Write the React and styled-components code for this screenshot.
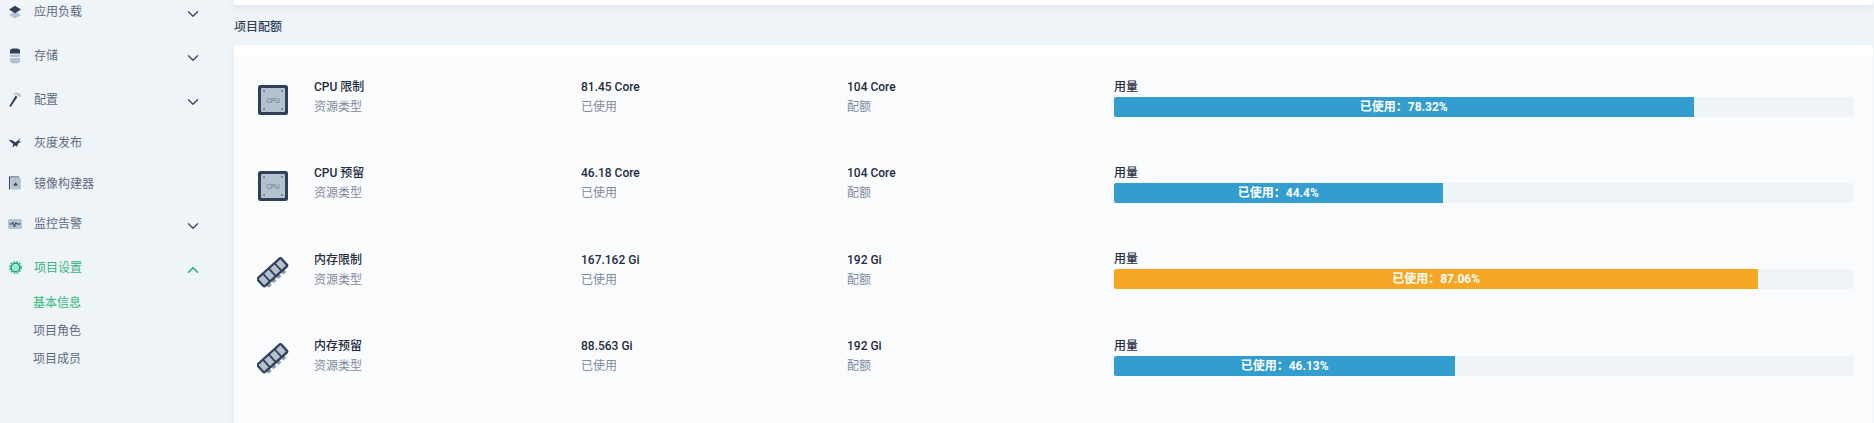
import React from "react";
import styled, { createGlobalStyle } from "styled-components";
import { ChevronDown, ChevronUp } from "lucide-react";

const GlobalStyle = createGlobalStyle`
  html, body {
    margin: 0;
    padding: 0;
    height: 423px;
    overflow: hidden;
    background: #eff4f8;
  }
  body {
    font-family: Roboto, "Noto Sans CJK SC", sans-serif;
    font-size: 12px;
    color: #2f4058;
  }
`;

const Layout = styled.div`
  display: flex;
  height: 423px;
  overflow: hidden;
`;

const Sidebar = styled.nav`
  width: 234px;
  flex: none;
  margin-top: -8px;
`;

const MenuItem = styled.div`
  display: flex;
  align-items: center;
  height: ${(p) => p.$h || 44}px;
  padding-left: 7px;
  width: 202px;
  box-sizing: border-box;
  color: ${(p) => (p.$active ? "#36b37e" : "#5c6b82")};
`;

const MenuIcon = styled.span`
  width: 16px;
  height: 16px;
  flex: none;
  display: flex;
  align-items: center;
  justify-content: center;
  margin-top: -5px;
`;

const MenuLabel = styled.span`
  margin-left: 11px;
  flex: 1;
  line-height: 16px;
  margin-top: -4px;
`;

const Chevron = styled.span`
  display: flex;
  color: ${(p) => (p.$active ? "#13a67c" : "#3b4a60")};
`;

const SubMenu = styled.div`
  display: flex;
  flex-direction: column;
  margin-top: -4px;
`;

const SubItem = styled.div`
  height: 28px;
  line-height: 28px;
  padding-left: 33px;
  color: ${(p) => (p.$active ? "#4fc08d" : "#5c6b82")};
  font-weight: ${(p) => (p.$active ? 500 : 400)};
`;

const Main = styled.main`
  flex: 1;
  min-width: 0;
  padding-right: 1px;
`;

const TopCard = styled.div`
  height: 5px;
  background: #fff;
  border-radius: 0 0 3px 3px;
  box-shadow: 0 2px 8px rgba(47, 64, 88, 0.12);
`;

const SectionTitle = styled.h3`
  margin: 0;
  height: 40px;
  line-height: 44px;
  font-size: 12px;
  font-weight: 500;
  color: #2f4058;
`;

const Card = styled.section`
  background: #fff;
  border-radius: 3px 3px 0 0;
  padding-top: 12px;
  box-shadow: -2px 2px 6px rgba(47, 64, 88, 0.05);
  height: 400px;
  box-sizing: border-box;
`;

const CardBody = styled.div`
  background: #fafbfd;
  height: 100%;
`;

const Row = styled.div`
  display: grid;
  grid-template-columns: 80px 267px 266px 267px 740px;
  align-items: center;
  height: 86.3px;
`;

const IconCell = styled.div`
  display: flex;
  padding-left: 24px;
`;

const Stat = styled.div`
  display: flex;
  flex-direction: column;
  gap: 4px;
  margin-top: -6px;
`;

const StatValue = styled.div`
  font-weight: 500;
  line-height: 16px;
  color: #1f2d40;
`;

const StatLabel = styled.div`
  line-height: 16px;
  color: #7d8ba0;
`;

const Usage = styled.div`
  display: flex;
  flex-direction: column;
  gap: 1px;
  margin-top: -6px;
`;

const UsageLabel = styled.div`
  font-weight: 500;
  line-height: 18px;
  color: #1f2d40;
`;

const Track = styled.div`
  height: 20px;
  background: #eff4f8;
  border-radius: 2px;
  overflow: hidden;
`;

const Fill = styled.div`
  height: 100%;
  background: ${(p) => (p.$warn ? "#f5a623" : "#329dce")};
  color: #fff;
  font-weight: 700;
  line-height: 20px;
  text-align: center;
  white-space: nowrap;
`;

const LayersIcon = () => (
  <svg width="14" height="14" viewBox="0 0 14 14">
    <path d="M7 6.5 13 10 7 13.4 1 10z" fill="#b4c1cf" />
    <path d="M7 .8 13 4.5 7 8.2 1 4.5z" fill="#2f4058" />
  </svg>
);

const DatabaseIcon = () => (
  <svg width="12" height="16" viewBox="0 0 12 16">
    <path d="M1 2.5C1 1 3 .5 6 .5s5 .5 5 2v3H1z" fill="#2f4058" />
    <path d="M1 6.5h10V9H1zM1 10h10v3.5c0 1.5-2 2-5 2s-5-.5-5-2z" fill="#b4c1cf" />
  </svg>
);

const HammerIcon = () => (
  <svg width="14" height="16" viewBox="0 0 14 16">
    <path d="M7.6 3.4 9.4 5 3 14.6c-.5.6-1.8-.2-1.5-.9z" fill="#2f4058" />
    <path d="M3.8 2.4C6.5.2 9.6.2 12 1.6l1.2 2.6-2 .9C9.6 3 7 2 3.8 2.4z" fill="#b4c1cf" />
  </svg>
);

const BirdIcon = () => (
  <svg width="14" height="12" viewBox="0 0 14 12">
    <path d="M.6 2.4 5 3.6 7 5.2l2-1L12.6.8 10.8 4l2.6 1-3.2 1.2-1 3.6L7 8.4l-2.6 2 .8-3.4L3 5.2z" fill="#2f4058" />
  </svg>
);

const ImageBuildIcon = () => (
  <svg width="12" height="14" viewBox="0 0 12 14">
    <path d="M0 .4h10v1H1v12H0z" fill="#2f4058" />
    <rect x="1.4" y="1.6" width="10.4" height="12" rx="1" fill="#b4c1cf" />
    <path d="M6.6 6.4 9 9.6H4.2z" fill="#2f4058" />
  </svg>
);

const MonitorIcon = () => (
  <svg width="14" height="10" viewBox="0 0 14 10">
    <rect width="14" height="10" rx="1.5" fill="#b4c1cf" />
    <path d="M1.6 5h2.2l1-2 1.6 5 1.4-4.4.8 1.4h3.8" fill="none" stroke="#2f4058" strokeWidth="1" />
  </svg>
);

const GearIcon = () => (
  <svg width="13" height="13" viewBox="0 0 13 13">
    <circle cx="6.5" cy="6.5" r="3" fill="#9fe3c9" />
    <circle cx="6.5" cy="6.5" r="4.3" fill="none" stroke="#13a67c" strokeWidth="1.6" />
    <circle cx="6.5" cy="6.5" r="5.7" fill="none" stroke="#13a67c" strokeWidth="1.4" strokeDasharray="1.6 1.4" />
  </svg>
);

const CpuIcon = () => (
  <svg width="30" height="30" viewBox="0 0 30 30">
    <rect width="30" height="30" rx="2.5" fill="#2f4058" />
    <rect x="3" y="3" width="24" height="24" rx="1" fill="#b4c1cf" />
    <g fill="#7d8ba0">
      <rect x="5" y="5" width="2" height="2" />
      <rect x="23" y="5" width="2" height="2" />
      <rect x="5" y="23" width="2" height="2" />
      <rect x="23" y="23" width="2" height="2" />
    </g>
    <text x="15" y="17.5" textAnchor="middle" fontSize="7" fontFamily="Roboto, sans-serif" fill="#6f7c8e">
      CPU
    </text>
  </svg>
);

const MemoryIcon = () => (
  <svg width="32" height="32" viewBox="0 0 32 32" style={{ marginLeft: -1 }}>
    <g transform="rotate(-42 16 16)">
      <g fill="#8b98ab">
        <rect x="3" y="21" width="4" height="3" />
        <rect x="9.5" y="21" width="4" height="3" />
        <rect x="16" y="21" width="4" height="3" />
        <rect x="22.5" y="21" width="4" height="3" />
      </g>
      <rect x="-1" y="8.5" width="34" height="13" rx="2.5" fill="#2f4058" />
      <g fill="#b4c1cf">
        <rect x="1.2" y="10.8" width="6" height="8.4" />
        <rect x="9" y="10.8" width="6" height="8.4" />
        <rect x="16.8" y="10.8" width="6" height="8.4" />
        <rect x="24.6" y="10.8" width="6" height="8.4" />
      </g>
    </g>
  </svg>
);

const menu = [
  { label: "应用负载", icon: <LayersIcon />, arrow: true },
  { label: "存储", icon: <DatabaseIcon />, arrow: true },
  { label: "配置", icon: <HammerIcon />, arrow: true },
  { label: "灰度发布", icon: <BirdIcon />, h: 42 },
  { label: "镜像构建器", icon: <ImageBuildIcon />, h: 39 },
  { label: "监控告警", icon: <MonitorIcon />, arrow: true, h: 42 },
];

const quotas = [
  { name: "CPU 限制", used: "81.45 Core", total: "104 Core", pct: 78.32, icon: <CpuIcon /> },
  { name: "CPU 预留", used: "46.18 Core", total: "104 Core", pct: 44.4, icon: <CpuIcon /> },
  { name: "内存限制", used: "167.162 Gi", total: "192 Gi", pct: 87.06, icon: <MemoryIcon />, warn: true },
  { name: "内存预留", used: "88.563 Gi", total: "192 Gi", pct: 46.13, icon: <MemoryIcon /> },
];

export default function App() {
  return (
    <>
      <GlobalStyle />
      <Layout>
        <Sidebar>
          {menu.map((m) => (
            <MenuItem key={m.label} $h={m.h}>
              <MenuIcon>{m.icon}</MenuIcon>
              <MenuLabel>{m.label}</MenuLabel>
              {m.arrow && (
                <Chevron>
                  <ChevronDown size={18} strokeWidth={1.8} />
                </Chevron>
              )}
            </MenuItem>
          ))}
          <MenuItem $active $h={46}>
            <MenuIcon>
              <GearIcon />
            </MenuIcon>
            <MenuLabel>项目设置</MenuLabel>
            <Chevron $active>
              <ChevronUp size={18} strokeWidth={1.8} />
            </Chevron>
          </MenuItem>
          <SubMenu>
            <SubItem $active>基本信息</SubItem>
            <SubItem>项目角色</SubItem>
            <SubItem>项目成员</SubItem>
          </SubMenu>
        </Sidebar>
        <Main>
          <TopCard />
          <SectionTitle>项目配额</SectionTitle>
          <Card>
            <CardBody>
              {quotas.map((q) => (
                <Row key={q.name}>
                  <IconCell>{q.icon}</IconCell>
                  <Stat>
                    <StatValue>{q.name}</StatValue>
                    <StatLabel>资源类型</StatLabel>
                  </Stat>
                  <Stat>
                    <StatValue>{q.used}</StatValue>
                    <StatLabel>已使用</StatLabel>
                  </Stat>
                  <Stat>
                    <StatValue>{q.total}</StatValue>
                    <StatLabel>配额</StatLabel>
                  </Stat>
                  <Usage>
                    <UsageLabel>用量</UsageLabel>
                    <Track>
                      <Fill $warn={q.warn} style={{ width: `${q.pct}%` }}>
                        已使用：{q.pct}%
                      </Fill>
                    </Track>
                  </Usage>
                </Row>
              ))}
            </CardBody>
          </Card>
        </Main>
      </Layout>
    </>
  );
}
